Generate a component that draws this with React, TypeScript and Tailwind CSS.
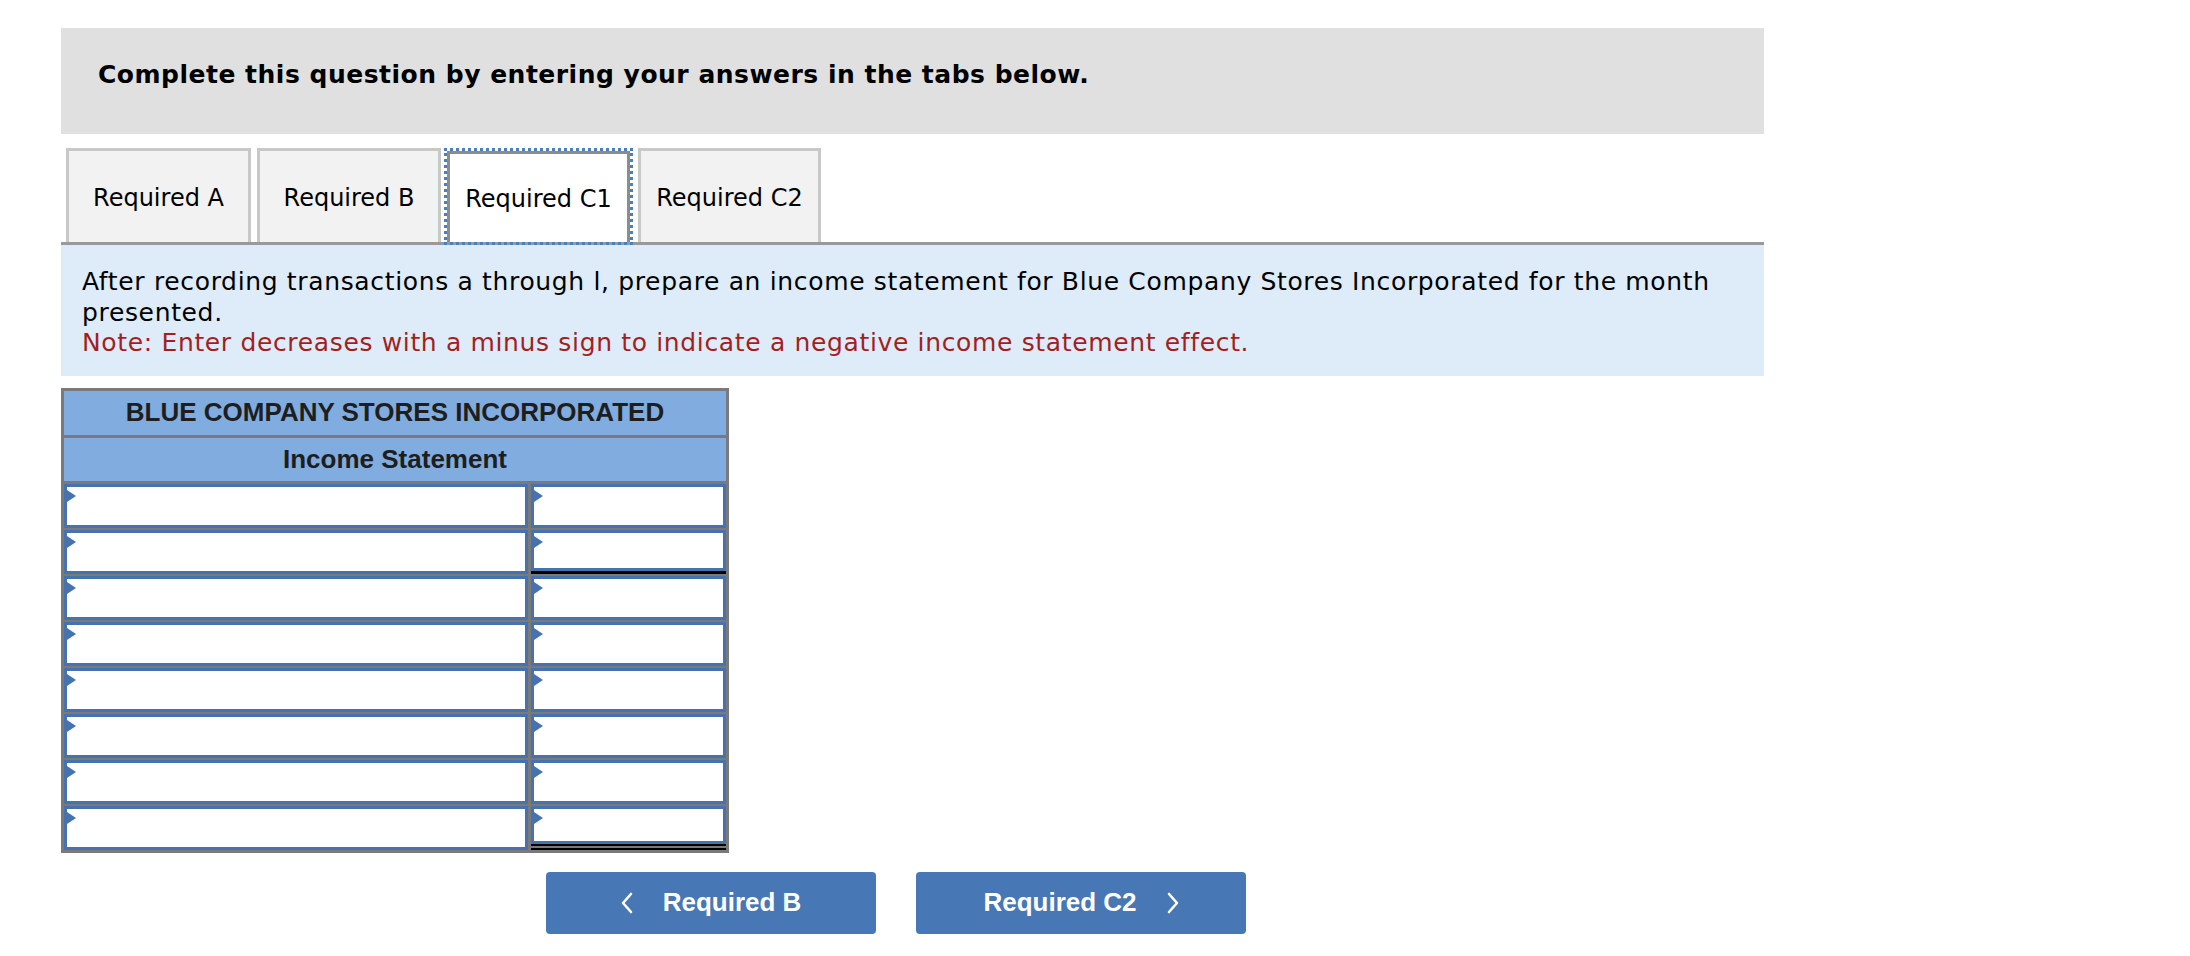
import React from "react";

const rows = [0, 1, 2, 3, 4, 5, 6, 7];

function Marker() {
    return (
        <svg className="absolute left-0 top-[3px]" width="9" height="12" viewBox="0 0 9 12">
            <polygon points="0,0 9,6 0,12" fill="#4672b0" />
        </svg>
    );
}

function Chevron({ dir }: { dir: "left" | "right" }) {
    return (
        <svg width="12" height="22" viewBox="0 0 12 22">
            <polyline
                points={dir === "left" ? "10,2 2,11 10,20" : "2,2 10,11 2,20"}
                fill="none"
                stroke="white"
                strokeWidth="2.6"
                strokeLinecap="round"
                strokeLinejoin="round"
            />
        </svg>
    );
}

function Tab({ label, className }: { label: string; className: string }) {
    return (
        <div
            className={`h-[94px] border-[3px] border-b-0 border-[#c8c8c8] bg-[#f2f2f2] pt-[2px] flex items-center justify-center text-[24px] ${className}`}
        >
            {label}
        </div>
    );
}

export default function App() {
    return (
        <div className="w-[2190px] h-[956px] bg-white pl-[61px] pt-[28px] font-['DejaVu_Sans',Verdana,sans-serif] text-black">
            <div className="w-[1703px]">
                {/* Header banner */}
                <div className="h-[106px] bg-[#e0e0e0] pl-[37px] pt-[32px]">
                    <h1 className="text-[25px] leading-[30px] font-bold tracking-[0.5px]">
                        Complete this question by entering your answers in the tabs below.
                    </h1>
                </div>

                {/* Tabs */}
                <div className="mt-[14px] flex items-end pl-[5px]">
                    <Tab label="Required A" className="w-[185px]" />
                    <Tab label="Required B" className="ml-[6px] w-[184px]" />
                    <div className="ml-[3px] -mb-[3px] h-[97px] w-[189px] outline-[3px] outline-dotted outline-[#4a7ec2] -outline-offset-[3px]">
                        <div className="m-[3px] h-[91px] border-[3px] border-b-0 border-[#8c8c8c] bg-white pt-[2px] flex items-center justify-center text-[24px]">
                            Required C1
                        </div>
                    </div>
                    <Tab label="Required C2" className="ml-[5px] w-[183px]" />
                </div>
                <div className="h-[3px] bg-[#999999]" />

                {/* Instructions */}
                <div className="bg-[#deebf8] pl-[21px] pr-[20px] pt-[22px] pb-[17px] text-[25px] leading-[30.5px] tracking-[0.65px]">
                    <p>
                        After recording transactions a through l, prepare an income statement for Blue Company Stores Incorporated for the month presented.
                    </p>
                    <p className="text-[#a31f1f]">Note: Enter decreases with a minus sign to indicate a negative income statement effect.</p>
                </div>

                {/* Income statement table */}
                <div className="mt-[12px] w-[668px] border-[3px] border-[#7a7a7a] bg-[#7a7a7a] font-['Liberation_Sans',Arial,sans-serif]">
                    <div className="h-[44px] bg-[#80acdf] flex items-center justify-center text-[26px] font-bold text-[#1e1e1e]">
                        BLUE COMPANY STORES INCORPORATED
                    </div>
                    <div className="mt-[3px] h-[43px] bg-[#80acdf] flex items-center justify-center text-[26px] font-bold text-[#1e1e1e]">
                        Income Statement
                    </div>
                    <div className="mt-[3px] flex flex-col gap-[2px]">
                        {rows.map((i) => (
                            <div key={i} className="flex gap-[3px] h-[44px]">
                                <div className="relative w-[464px] border-[3px] border-[#4672b0] bg-white">
                                    <Marker />
                                </div>
                                <div
                                    className={
                                        i === 1
                                            ? "flex-1 border-b-[3px] border-black"
                                            : i === 7
                                            ? "flex-1 border-b-[6px] border-double border-black"
                                            : "flex-1"
                                    }
                                >
                                    <div className="relative h-full border-[3px] border-[#4672b0] bg-white">
                                        <Marker />
                                    </div>
                                </div>
                            </div>
                        ))}
                    </div>
                </div>

                {/* Navigation buttons */}
                <div className="mt-[19px] ml-[485px] flex gap-[40px] font-['Liberation_Sans',Arial,sans-serif]">
                    <button className="w-[330px] h-[62px] rounded-[4px] bg-[#4777b4] text-white text-[26px] font-bold flex items-center justify-center gap-[30px]">
                        <Chevron dir="left" />
                        <span>Required B</span>
                    </button>
                    <button className="w-[330px] h-[62px] rounded-[4px] bg-[#4777b4] text-white text-[26px] font-bold flex items-center justify-center gap-[30px]">
                        <span>Required C2</span>
                        <Chevron dir="right" />
                    </button>
                </div>
            </div>
        </div>
    );
}
